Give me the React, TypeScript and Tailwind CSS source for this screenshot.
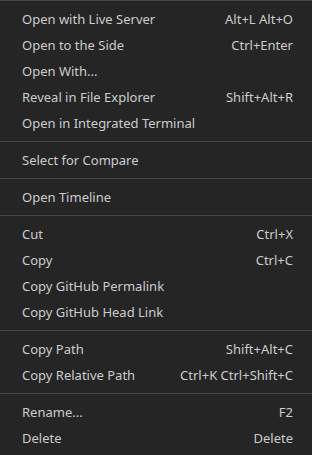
import React from "react";

type Item = { label: string; key?: string } | "sep";

const items: Item[] = [
  { label: "Open with Live Server", key: "Alt+L Alt+O" },
  { label: "Open to the Side", key: "Ctrl+Enter" },
  { label: "Open With..." },
  { label: "Reveal in File Explorer", key: "Shift+Alt+R" },
  { label: "Open in Integrated Terminal" },
  "sep",
  { label: "Select for Compare" },
  "sep",
  { label: "Open Timeline" },
  "sep",
  { label: "Cut", key: "Ctrl+X" },
  { label: "Copy", key: "Ctrl+C" },
  { label: "Copy GitHub Permalink" },
  { label: "Copy GitHub Head Link" },
  "sep",
  { label: "Copy Path", key: "Shift+Alt+C" },
  { label: "Copy Relative Path", key: "Ctrl+K Ctrl+Shift+C" },
  "sep",
  { label: "Rename...", key: "F2" },
  { label: "Delete", key: "Delete" },
];

export default function App() {
  return (
    <div
      className="w-[312px] h-[455px] bg-[#252526] border-t border-[#454545] pt-[5px] text-[#cccccc] text-[13px] overflow-hidden"
      style={{ fontFamily: '"Noto Sans", "Open Sans", sans-serif' }}
    >
      {items.map((it, i) =>
        it === "sep" ? (
          <div key={i} className="py-[5px]">
            <div className="h-px bg-[#454545]" />
          </div>
        ) : (
          <div
            key={i}
            className="h-[26px] flex items-center justify-between pl-[22px] pr-[19px] pt-[2px] whitespace-nowrap"
          >
            <span>{it.label}</span>
            {it.key && <span>{it.key}</span>}
          </div>
        )
      )}
    </div>
  );
}
